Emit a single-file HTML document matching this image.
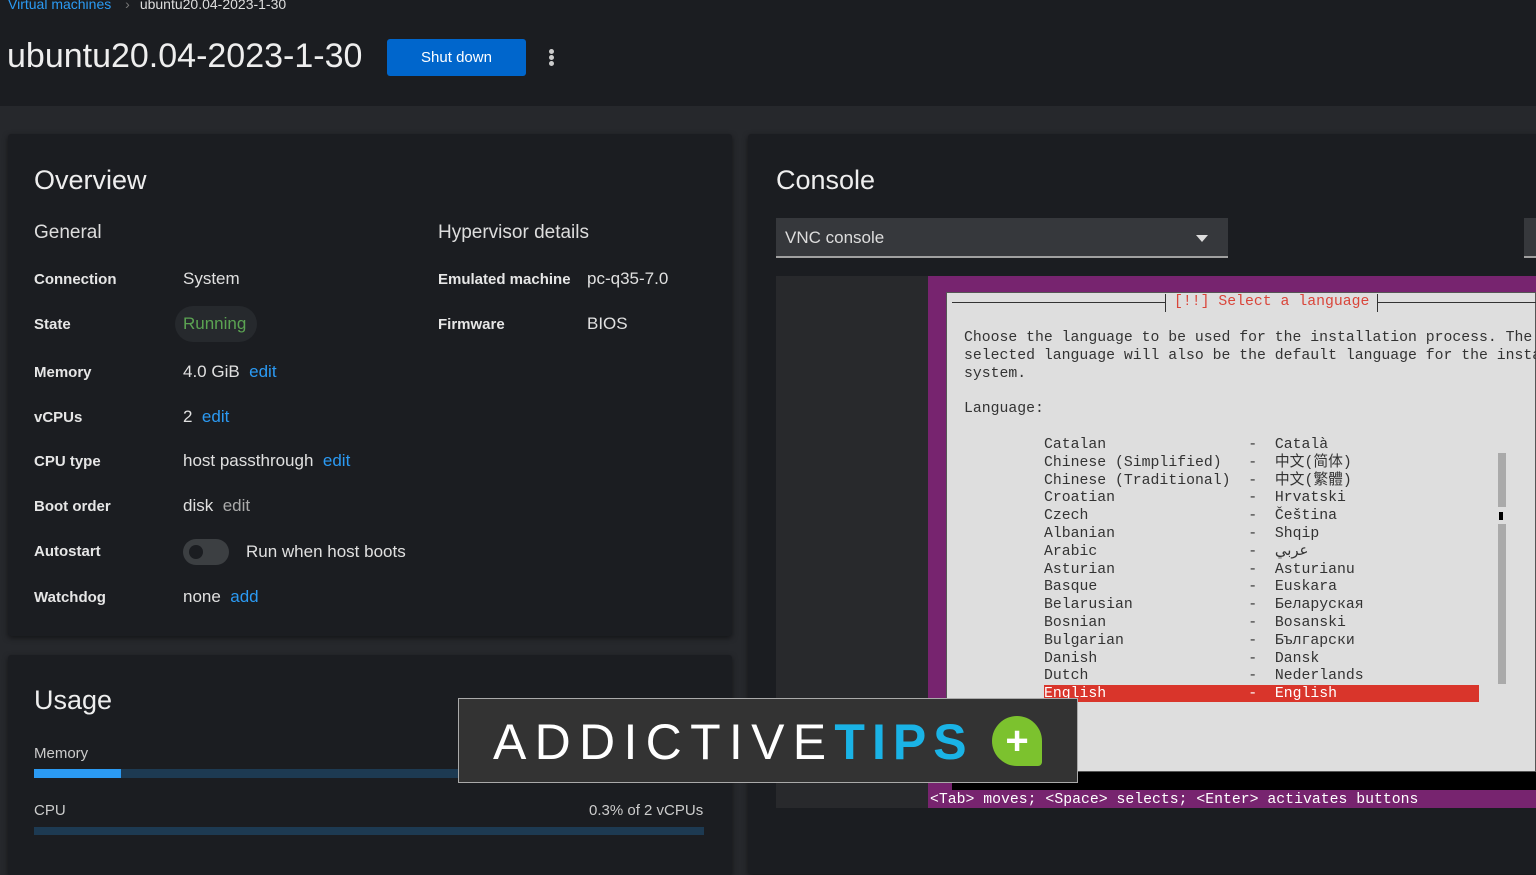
<!DOCTYPE html>
<html><head><meta charset="utf-8"><style>
*{margin:0;padding:0;box-sizing:border-box}
body{width:1536px;height:864px;overflow:hidden;background:#26282c;font-family:"Liberation Sans",sans-serif;color:#e0e0e0;position:relative}
.abs{position:absolute}
.hdr{left:0;top:0;width:1536px;height:106px;background:#1b1d21}
.card{background:#1b1d21;border-radius:3px;box-shadow:0 2px 6px rgba(0,0,0,.5)}
.lbl{font-weight:bold;font-size:15px;color:#e6e6e6}
.val{font-size:17px;color:#e0e0e0}
.lnk{color:#2b9af3}
.mono{font-family:"Liberation Mono","Noto Sans CJK SC",monospace;font-size:14.8px;line-height:17.8px;color:#333;white-space:pre}
</style></head><body>
<div class="abs hdr"></div>
<div class="abs" style="left:8px;top:-4px;font-size:14px;color:#2b9af3">Virtual machines <span style="color:#777;margin:0 10px">›</span><span style="color:#ddd">ubuntu20.04-2023-1-30</span></div>
<div class="abs" style="left:7px;top:37px;font-size:34px;color:#eee">ubuntu20.04-2023-1-30</div>
<div class="abs" style="left:387px;top:39px;width:139px;height:37px;background:#0066cc;border-radius:3px;color:#fff;font-size:15px;text-align:center;line-height:37px">Shut down</div>
<div class="abs" style="left:549px;top:49px;width:5px">
<div style="width:5px;height:5px;border-radius:50%;background:#ccc;margin-bottom:1px"></div><div style="width:5px;height:5px;border-radius:50%;background:#ccc;margin-bottom:1px"></div><div style="width:5px;height:5px;border-radius:50%;background:#ccc"></div></div>

<div class="abs card" style="left:8px;top:134px;width:724px;height:502px"></div>
<div class="abs" style="left:34px;top:165px;font-size:27px;color:#eee">Overview</div>
<div class="abs" style="left:34px;top:222px;font-size:19px;color:#ddd">General</div>
<div class="abs" style="left:438px;top:222px;font-size:19px;color:#ddd">Hypervisor details</div>
<div class="abs lbl" style="left:34px;top:271px">Connection</div><div class="abs val" style="left:183px;top:269px">System</div>
<div class="abs lbl" style="left:34px;top:316px">State</div>
<div class="abs" style="left:175px;top:306px;width:82px;height:36px;border-radius:18px;background:#26292d"></div>
<div class="abs val" style="left:183px;top:314px;color:#5ba352">Running</div>
<div class="abs lbl" style="left:34px;top:364px">Memory</div><div class="abs val" style="left:183px;top:362px">4.0 GiB <span class="lnk">&nbsp;edit</span></div>
<div class="abs lbl" style="left:34px;top:409px">vCPUs</div><div class="abs val" style="left:183px;top:407px">2 <span class="lnk">&nbsp;edit</span></div>
<div class="abs lbl" style="left:34px;top:453px">CPU type</div><div class="abs val" style="left:183px;top:451px">host passthrough <span class="lnk">&nbsp;edit</span></div>
<div class="abs lbl" style="left:34px;top:498px">Boot order</div><div class="abs val" style="left:183px;top:496px">disk <span style="color:#aaa">&nbsp;edit</span></div>
<div class="abs lbl" style="left:34px;top:543px">Autostart</div>
<div class="abs" style="left:183px;top:539px;width:46px;height:26px;border-radius:13px;background:#3c3f42"><div style="position:absolute;left:6px;top:6px;width:14px;height:14px;border-radius:50%;background:#1b1d21"></div></div>
<div class="abs val" style="left:246px;top:542px">Run when host boots</div>
<div class="abs lbl" style="left:34px;top:589px">Watchdog</div><div class="abs val" style="left:183px;top:587px">none <span class="lnk">&nbsp;add</span></div>
<div class="abs lbl" style="left:438px;top:271px">Emulated machine</div><div class="abs val" style="left:587px;top:269px">pc-q35-7.0</div>
<div class="abs lbl" style="left:438px;top:316px">Firmware</div><div class="abs val" style="left:587px;top:314px">BIOS</div>

<div class="abs card" style="left:8px;top:655px;width:724px;height:220px"></div>
<div class="abs" style="left:34px;top:685px;font-size:27px;color:#eee">Usage</div>
<div class="abs" style="left:34px;top:745px;font-size:15px;color:#ccc">Memory</div>
<div class="abs" style="left:34px;top:769px;width:670px;height:9px;background:#1d3a52"><div style="width:87px;height:9px;background:#2b9af3"></div></div>
<div class="abs" style="left:34px;top:802px;font-size:15px;color:#ccc">CPU</div>
<div class="abs" style="left:589px;top:802px;font-size:15px;color:#ccc">0.3% of 2 vCPUs</div>
<div class="abs" style="left:34px;top:827px;width:670px;height:8px;background:#1d3a52"></div>

<div class="abs card" style="left:748px;top:134px;width:800px;height:740px"></div>
<div class="abs" style="left:776px;top:165px;font-size:27px;color:#eee">Console</div>
<div class="abs" style="left:776px;top:218px;width:452px;height:40px;background:#36383c;border-bottom:2px solid #a0a0a0"></div>
<div class="abs" style="left:785px;top:228px;font-size:17px;color:#ddd">VNC console</div>
<div class="abs" style="left:1196px;top:235px;width:0;height:0;border-left:6px solid transparent;border-right:6px solid transparent;border-top:7px solid #ddd"></div>
<div class="abs" style="left:1524px;top:218px;width:20px;height:40px;background:#36383c;border-bottom:2px solid #a0a0a0"></div>
<div class="abs" style="left:776px;top:276px;width:760px;height:532px;background:#28292c"></div>
<div class="abs" style="left:928px;top:276px;width:608px;height:532px;background:#77246f"></div>
<div class="abs" style="left:946px;top:292px;width:590px;height:480px;background:#dedede;border:1px solid #555"></div>
<div class="abs" style="left:952px;top:772px;width:584px;height:18px;background:#000"></div>
<div class="abs" style="left:952px;top:302px;width:584px;height:1px;background:#333"></div>
<div class="abs mono" style="left:1165px;top:294px;background:#dedede;color:#d9453a;border-left:1px solid #333;border-right:1px solid #333;padding:0 8px">[!!] Select a language</div>
<div class="abs mono" style="left:964px;top:330px">Choose the language to be used for the installation process. The
selected language will also be the default language for the insta
system.

Language:</div>
<div class="abs" style="left:1044px;top:685px;width:435px;height:17px;background:#d9352b"></div>
<div class="abs mono" style="left:1044px;top:437px">Catalan                -  Català
Chinese (Simplified)   -  中文(简体)
Chinese (Traditional)  -  中文(繁體)
Croatian               -  Hrvatski
Czech                  -  Čeština
Albanian               -  Shqip
Arabic                 -  عربي
Asturian               -  Asturianu
Basque                 -  Euskara
Belarusian             -  Беларуская
Bosnian                -  Bosanski
Bulgarian              -  Български
Danish                 -  Dansk
Dutch                  -  Nederlands
<span style="color:#fff">English                -  English</span></div>
<div class="abs" style="left:1498px;top:453px;width:8px;height:54px;background:#aaa"></div>
<div class="abs" style="left:1499px;top:512px;width:4px;height:8px;background:#000"></div>
<div class="abs" style="left:1498px;top:524px;width:8px;height:160px;background:#aaa"></div>
<div class="abs mono" style="left:930px;top:792px;color:#fff">&lt;Tab&gt; moves; &lt;Space&gt; selects; &lt;Enter&gt; activates buttons</div>

<div class="abs" style="left:458px;top:698px;width:620px;height:85px;background:#333;border:1px solid #aaa"></div>
<div class="abs" style="left:493px;top:713px;font-size:50px;letter-spacing:8.3px;color:#fff;font-weight:300">ADDICTIVE<span style="color:#1ab3e6;font-weight:bold;letter-spacing:7px">TIPS</span></div>
<div class="abs" style="left:992px;top:716px;width:50px;height:50px;background:#7cc22e;border-radius:25px 25px 4px 25px;color:#fff;font-size:40px;font-weight:bold;text-align:center;line-height:50px">+</div>
</body></html>
